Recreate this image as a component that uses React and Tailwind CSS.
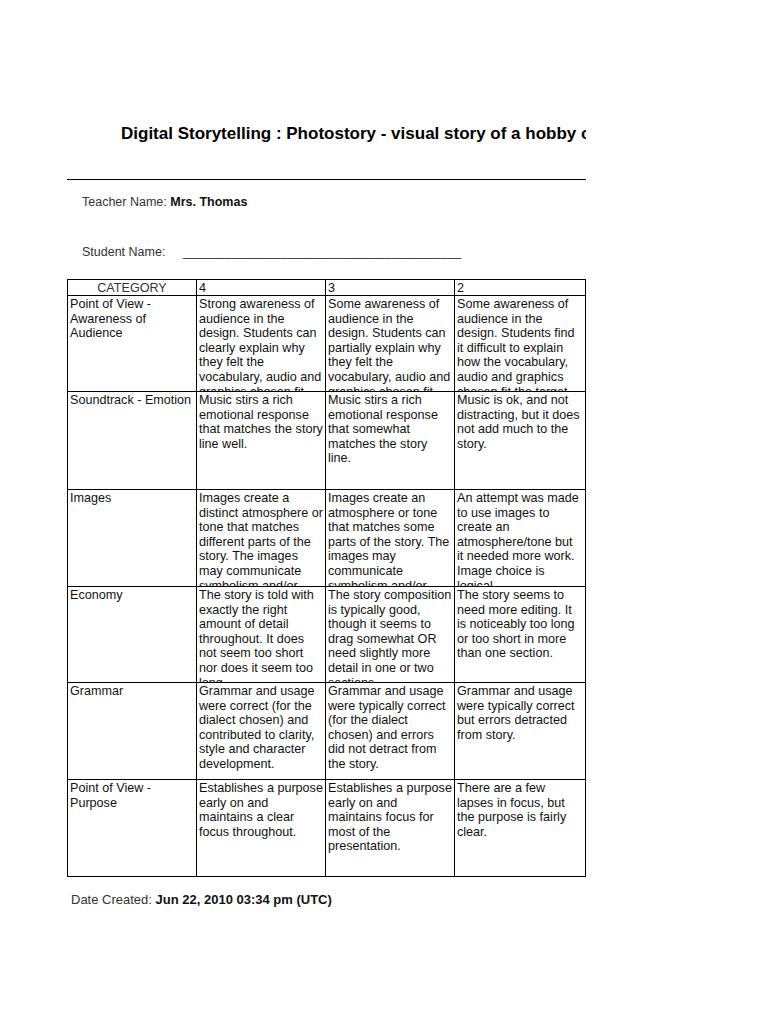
const rows = [
  {
    h: 'h-[96px]',
    cells: [
      ['Point of View -', 'Awareness of', 'Audience'],
      ['Strong awareness of', 'audience in the', 'design. Students can', 'clearly explain why', 'they felt the', 'vocabulary, audio and', 'graphics chosen fit', 'the target audience.'],
      ['Some awareness of', 'audience in the', 'design. Students can', 'partially explain why', 'they felt the', 'vocabulary, audio and', 'graphics chosen fit', 'the target audience.'],
      ['Some awareness of', 'audience in the', 'design. Students find', 'it difficult to explain', 'how the vocabulary,', 'audio and graphics', 'chosen fit the target', 'audience.'],
    ],
  },
  {
    h: 'h-[98px]',
    cells: [
      ['Soundtrack - Emotion'],
      ['Music stirs a rich', 'emotional response', 'that matches the story', 'line well.'],
      ['Music stirs a rich', 'emotional response', 'that somewhat', 'matches the story', 'line.'],
      ['Music is ok, and not', 'distracting, but it does', 'not add much to the', 'story.'],
    ],
  },
  {
    h: 'h-[97px]',
    cells: [
      ['Images'],
      ['Images create a', 'distinct atmosphere or', 'tone that matches', 'different parts of the', 'story. The images', 'may communicate', 'symbolism and/or', 'meaning.'],
      ['Images create an', 'atmosphere or tone', 'that matches some', 'parts of the story. The', 'images may', 'communicate', 'symbolism and/or', 'meaning.'],
      ['An attempt was made', 'to use images to', 'create an', 'atmosphere/tone but', 'it needed more work.', 'Image choice is', 'logical.'],
    ],
  },
  {
    h: 'h-[96px]',
    cells: [
      ['Economy'],
      ['The story is told with', 'exactly the right', 'amount of detail', 'throughout. It does', 'not seem too short', 'nor does it seem too', 'long.'],
      ['The story composition', 'is typically good,', 'though it seems to', 'drag somewhat OR', 'need slightly more', 'detail in one or two', 'sections.'],
      ['The story seems to', 'need more editing. It', 'is noticeably too long', 'or too short in more', 'than one section.'],
    ],
  },
  {
    h: 'h-[97px]',
    cells: [
      ['Grammar'],
      ['Grammar and usage', 'were correct (for the', 'dialect chosen) and', 'contributed to clarity,', 'style and character', 'development.'],
      ['Grammar and usage', 'were typically correct', '(for the dialect', 'chosen) and errors', 'did not detract from', 'the story.'],
      ['Grammar and usage', 'were typically correct', 'but errors detracted', 'from story.'],
    ],
  },
  {
    h: 'h-[97px]',
    cells: [
      ['Point of View -', 'Purpose'],
      ['Establishes a purpose', 'early on and', 'maintains a clear', 'focus throughout.'],
      ['Establishes a purpose', 'early on and', 'maintains focus for', 'most of the', 'presentation.'],
      ['There are a few', 'lapses in focus, but', 'the purpose is fairly', 'clear.'],
    ],
  },
];

function Cell({ lines, h }) {
  return (
    <div className={`${h} overflow-hidden border-r border-b border-black pl-[2px] pt-[1px]`}>
      {lines.map((l, i) => (
        <div key={i} className="whitespace-nowrap leading-[14.6px]">
          {l}
        </div>
      ))}
    </div>
  );
}

export default function App() {
  return (
    <div className="w-[768px] min-h-[1024px] bg-white text-[#111] font-['Liberation_Sans',Arial,sans-serif]">
      <div className="ml-[67px] w-[519px] pt-[124px]">
        {/* title runs off the page edge, like the original export */}
        <div className="overflow-hidden whitespace-nowrap pl-[54px] text-[17px] font-bold leading-[20px] text-black">
          Digital Storytelling : Photostory - visual story of a hobby or interest
        </div>
        <div className="mt-[35px] h-px bg-black" />

        <div className="mt-[14px] pl-[15px] text-[12.5px] leading-[16px] text-[#333]">
          Teacher Name: <span className="font-bold text-[#111]">Mrs. Thomas</span>
        </div>
        <div className="mt-[34px] flex pl-[15px] text-[12.5px] leading-[16px] text-[#333]">
          <span className="w-[101px]">Student Name:</span>
          <span>________________________________________</span>
        </div>

        <div className="mt-[19px] grid grid-cols-[129px_129px_129px_131px] border-t border-l border-black text-[12.6px]">
          <div className="h-[16px] overflow-hidden border-r border-b border-black pt-[1px] text-center leading-[14.6px] text-[#333]">
            CATEGORY
          </div>
          <div className="h-[16px] overflow-hidden border-r border-b border-black pl-[2px] pt-[1px] leading-[14.6px]">4</div>
          <div className="h-[16px] overflow-hidden border-r border-b border-black pl-[2px] pt-[1px] leading-[14.6px]">3</div>
          <div className="h-[16px] overflow-hidden border-r border-b border-black pl-[2px] pt-[1px] leading-[14.6px]">2</div>
          {rows.map((r, ri) =>
            r.cells.map((c, ci) => <Cell key={`${ri}-${ci}`} lines={c} h={r.h} />)
          )}
        </div>

        <div className="mt-[15px] pl-[4px] text-[13px] leading-[16px] text-[#333]">
          Date Created: <span className="font-bold text-[#111]">Jun 22, 2010 03:34 pm (UTC)</span>
        </div>
      </div>
    </div>
  );
}
